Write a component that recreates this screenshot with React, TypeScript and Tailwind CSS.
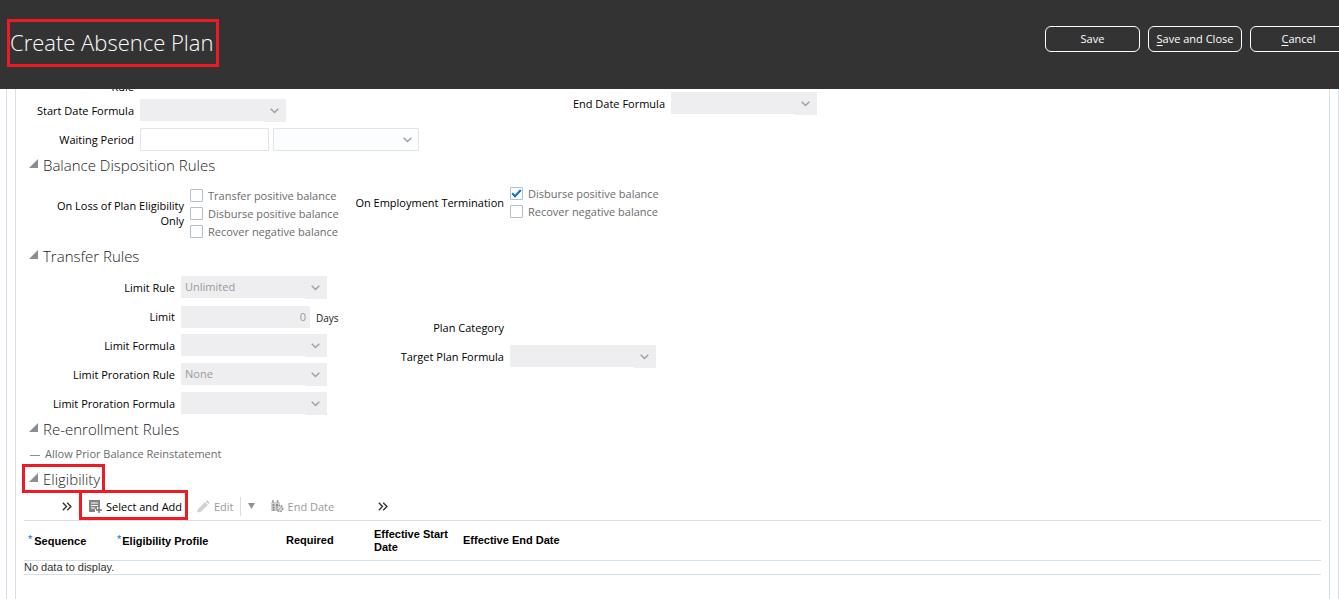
import React from "react";

interface SelectFieldProps {
    id: string;
    label?: string;
    value?: string;
    disabled?: boolean;
}

interface FieldRowProps {
    id?: string;
    label: string;
    labelClass: string;
    children?: React.ReactNode;
}

interface CheckItem {
    id: string;
    label: string;
    checked?: boolean;
}

const lossOptions: CheckItem[] = [
    { id: "loss-transfer", label: "Transfer positive balance" },
    { id: "loss-disburse", label: "Disburse positive balance" },
    { id: "loss-recover", label: "Recover negative balance" },
];

const terminationOptions: CheckItem[] = [
    { id: "term-disburse", label: "Disburse positive balance", checked: true },
    { id: "term-recover", label: "Recover negative balance" },
];

const SelectField: React.FC<SelectFieldProps> = ({ id, label, value = "", disabled = true }) => (
    <span className="relative block h-[23px] w-[146px]">
        <select
            id={id}
            aria-label={label}
            disabled={disabled}
            defaultValue={value}
            className={
                disabled
                    ? "block h-[22px] w-full appearance-none rounded-[1px] bg-[#eeeef0] px-1 text-[11px] leading-[22px] text-[#999] opacity-100"
                    : "block h-[23px] w-full appearance-none rounded-[1px] border border-[#dfe4e7] bg-[#fcfdff] px-1 text-[11px]"
            }
        >
            <option value={value}>{value}</option>
        </select>
        <span
            className={
                disabled
                    ? "pointer-events-none absolute top-0 right-0 flex h-[23px] w-[22px] items-center justify-center bg-[#eeeef0] pt-px pr-px"
                    : "pointer-events-none absolute top-0 right-0 flex h-[23px] w-[22px] items-center justify-center pt-px pr-px"
            }
        >
            <svg width="9" height="6" viewBox="0 0 9 6" fill="none" stroke="#a0a0a3" strokeWidth="1.5">
                <path d="M0.7 0.8 L4.5 4.5 L8.3 0.8" />
            </svg>
        </span>
    </span>
);

const FieldRow: React.FC<FieldRowProps> = ({ id, label, labelClass, children }) => (
    <div className="flex h-[23px] items-center gap-1.5">
        <label htmlFor={id} className={labelClass}>
            {label}
        </label>
        {children}
    </div>
);

const SectionTitle: React.FC<{ title: string; marked?: boolean }> = ({ title, marked }) => (
    <div className="flex h-6">
        <button type="button" aria-expanded="true" className="relative flex items-center gap-[5px] pl-[5px]">
            <svg width="9" height="9" viewBox="0 0 9 9" className="mb-1.5">
                <path d="M9 0 V9 H0 Z" fill="#8b8f93" />
            </svg>
            <h2 className="pb-0.5 text-[15px] leading-[22px] font-light whitespace-nowrap text-[#222]">{title}</h2>
            {marked && (
                <span className="absolute -top-1 -left-0.5 z-10 h-[29px] w-[83px] border-3 border-[#ed1c24]" />
            )}
        </button>
    </div>
);

const CheckGroup: React.FC<{ items: CheckItem[] }> = ({ items }) => (
    <div>
        {items.map((item) => (
            <div key={item.id} className="flex h-[18px] items-center gap-[5px]">
                <span className="relative block size-[13px]">
                    <input
                        id={item.id}
                        type="checkbox"
                        disabled
                        defaultChecked={item.checked}
                        className="block size-[13px] appearance-none rounded-[1px] border border-[#b4bec8] bg-white"
                    />
                    {item.checked && (
                        <svg
                            width="13"
                            height="13"
                            viewBox="0 0 13 13"
                            fill="none"
                            stroke="#0572ce"
                            strokeWidth="2"
                            className="absolute inset-0"
                        >
                            <path d="M2.2 6.3 L5 9.2 L10.8 3" />
                        </svg>
                    )}
                </span>
                <label htmlFor={item.id} className="whitespace-nowrap text-[#6b6b6b]">
                    {item.label}
                </label>
            </div>
        ))}
    </div>
);

const MoreIcon: React.FC = () => (
    <svg width="10" height="9" viewBox="0 0 10 9" fill="none" stroke="#333" strokeWidth="1.4">
        <path d="M0.8 0.8 L4.5 4.5 L0.8 8.2 M5.2 0.8 L8.9 4.5 L5.2 8.2" />
    </svg>
);

const Toolbar: React.FC = () => (
    <div className="flex h-7 items-center pl-[38px]">
        <button type="button" aria-label="More view actions">
            <MoreIcon />
        </button>
        <button type="button" className="relative ml-[7px] flex h-7 w-[109px] items-center gap-1 pl-2.5 text-black">
            <svg width="13" height="13" viewBox="0 0 13 13" className="shrink-0">
                <path d="M0 0 H11 V7 H8 V9 H6 V12 H0 Z" fill="#808487" />
                <path d="M2 3 H9 M2 5.5 H9 M2 8 H6" stroke="#fff" strokeWidth="1" />
                <path d="M10 7 V13 M7 10 H13" stroke="#6b6f72" strokeWidth="1.4" />
            </svg>
            <span className="whitespace-nowrap">Select and Add</span>
            <span className="absolute inset-x-0 -top-0.5 bottom-0 z-10 border-3 border-[#ed1c24]" />
        </button>
        <button type="button" disabled className="ml-2 flex items-center gap-1 text-[#999]">
            <svg width="14" height="13" viewBox="0 0 14 13">
                <path d="M1 12.5 L2 9 L9 2 L12 5 L5 11.8 Z" fill="#d0d2d3" />
                <path d="M9.8 1.2 L11 0.2 L13.4 2.6 L12.6 4 Z" fill="#c2c5c6" />
            </svg>
            Edit
        </button>
        <button
            type="button"
            disabled
            aria-label="Edit options"
            className="ml-1.5 flex h-[19px] items-center border-l border-[#d6dfe6] pl-[7px]"
        >
            <svg width="7" height="6" viewBox="0 0 7 6">
                <path d="M0 0 H7 L3.5 6 Z" fill="#8f9294" />
            </svg>
        </button>
        <button type="button" disabled className="ml-4 flex items-center gap-1 text-[#999]">
            <svg width="13" height="13" viewBox="0 0 13 13">
                <path d="M0 2 H9 V5 H11 V11 H0 Z" fill="#d3d5d6" />
                <path d="M2 0 V3 M6.5 0 V3" stroke="#999c9e" strokeWidth="1.5" />
                <path
                    d="M1.5 5 H3.5 M1.5 7.5 H3.5 M1.5 10 H3.5 M5 5 H7"
                    stroke="#77797b"
                    strokeWidth="1.4"
                />
                <circle cx="8.7" cy="8.5" r="3" fill="#e4e5e5" stroke="#909394" strokeWidth="1.6" strokeDasharray="1.6 0.9" />
                <path d="M6.5 10.8 L11 6.3" stroke="#909394" />
            </svg>
            <span className="whitespace-nowrap">End Date</span>
        </button>
        <button type="button" aria-label="More actions" className="ml-11">
            <MoreIcon />
        </button>
    </div>
);

const EligibilityTable: React.FC = () => (
    <table className="w-full table-fixed border-collapse border-y border-[#d6dfe6] font-['Liberation_Sans',Arial,sans-serif] text-[11px] leading-[13px]">
        <colgroup>
            <col className="w-[89px]" />
            <col className="w-[169px]" />
            <col className="w-[88px]" />
            <col className="w-[89px]" />
            <col />
        </colgroup>
        <thead>
            <tr className="h-10 border-b border-[#d6dfe6] text-left text-black">
                <th className="px-1">
                    <span className="mr-0.5 align-[2px] font-normal text-[#0572ce]">*</span>
                    Sequence
                </th>
                <th className="px-1">
                    <span className="mr-px align-[2px] font-normal text-[#0572ce]">*</span>
                    Eligibility Profile
                </th>
                <th className="px-1">Required</th>
                <th className="px-1">Effective Start Date</th>
                <th className="px-1">Effective End Date</th>
            </tr>
        </thead>
        <tbody>
            <tr className="h-3.5">
                <td colSpan={5} className="p-0 text-[#333]">
                    No data to display.
                </td>
            </tr>
        </tbody>
    </table>
);

const App: React.FC = () => {
    const topLabel = "w-[110px] text-right whitespace-nowrap";
    const endLabel = "w-[200px] text-right whitespace-nowrap";
    const limitLabel = "w-[151px] text-right whitespace-nowrap";
    const rightLabel = "w-40 text-right whitespace-nowrap";

    return (
        <div className="flex min-h-screen flex-col overflow-x-hidden bg-white font-['Open_Sans','Noto_Sans',sans-serif] text-[11px] leading-[15px] text-black">
            <header className="relative z-20 flex h-[89px] items-start justify-between bg-[#333] pl-[7px]">
                <h1 className="mt-[19px] flex h-12 w-[212px] items-center border-3 border-[#ed1c24] pb-0.5 text-[22px] font-light whitespace-nowrap text-white">
                    Create Absence Plan
                </h1>
                <div className="mt-[26px] -mr-2 flex gap-2 text-white">
                    <button type="button" className="h-[26px] w-[95px] rounded-md border border-white pb-0.5">
                        Save
                    </button>
                    <button type="button" className="h-[26px] w-[94px] rounded-md border border-white pb-0.5 whitespace-nowrap">
                        <span className="underline underline-offset-2">S</span>ave and Close
                    </button>
                    <button type="button" className="h-[26px] w-[97px] rounded-md border border-white pb-0.5">
                        <span className="underline underline-offset-2">C</span>ancel
                    </button>
                </div>
            </header>

            <main className="-mt-2.5 ml-1.5 flex grow border-x border-[#d6dfe6] px-2">
                <div className="min-w-0 grow border-x border-[#d6dfe6] px-2">
                    {/* Tail of the rules block, scrolled under the header */}
                    <div className="flex">
                        <div className="w-[441px]">
                            <p className="w-[110px] text-right">Rule</p>
                            <div className="mt-[5px] flex flex-col gap-1.5">
                                <FieldRow id="start-formula" label="Start Date Formula" labelClass={topLabel}>
                                    <SelectField id="start-formula" />
                                </FieldRow>
                                <FieldRow id="waiting" label="Waiting Period" labelClass={topLabel}>
                                    <div className="flex gap-1">
                                        <input
                                            id="waiting"
                                            type="text"
                                            className="h-[23px] w-[129px] rounded-[1px] border border-[#dfe4e7] bg-white px-1"
                                        />
                                        <SelectField id="waiting-unit" label="Waiting period unit" disabled={false} />
                                    </div>
                                </FieldRow>
                            </div>
                        </div>
                        <div className="pt-[13px]">
                            <FieldRow id="end-formula" label="End Date Formula" labelClass={endLabel}>
                                <SelectField id="end-formula" />
                            </FieldRow>
                        </div>
                    </div>

                    <section className="mt-[3px]">
                        <SectionTitle title="Balance Disposition Rules" />
                        <div className="mt-1.5 flex">
                            <div className="flex w-80 items-center gap-1.5 pt-0.5">
                                <p className="w-40 pl-6 text-right">On Loss of Plan Eligibility Only</p>
                                <CheckGroup items={lossOptions} />
                            </div>
                            <div className="flex items-center gap-1.5 self-start">
                                <p className={rightLabel}>On Employment Termination</p>
                                <CheckGroup items={terminationOptions} />
                            </div>
                        </div>
                    </section>

                    <section className="mt-[5px]">
                        <SectionTitle title="Transfer Rules" />
                        <div className="mt-[7px] flex">
                            <div className="flex w-80 flex-col gap-1.5">
                                <FieldRow id="limit-rule" label="Limit Rule" labelClass={limitLabel}>
                                    <SelectField id="limit-rule" value="Unlimited" />
                                </FieldRow>
                                <FieldRow id="limit" label="Limit" labelClass={limitLabel}>
                                    <input
                                        id="limit"
                                        type="text"
                                        disabled
                                        defaultValue="0"
                                        className="h-[22px] w-[129px] rounded-[1px] bg-[#eeeef0] px-1 text-right text-[#999]"
                                    />
                                    <span className="pt-1 text-[10px] text-[#222]">Days</span>
                                </FieldRow>
                                <FieldRow id="limit-formula" label="Limit Formula" labelClass={limitLabel}>
                                    <SelectField id="limit-formula" />
                                </FieldRow>
                                <FieldRow id="proration-rule" label="Limit Proration Rule" labelClass={limitLabel}>
                                    <SelectField id="proration-rule" value="None" />
                                </FieldRow>
                                <FieldRow id="proration-formula" label="Limit Proration Formula" labelClass={limitLabel}>
                                    <SelectField id="proration-formula" />
                                </FieldRow>
                            </div>
                            <div className="flex flex-col gap-1.5 pt-10">
                                <FieldRow label="Plan Category" labelClass={rightLabel} />
                                <FieldRow id="target-formula" label="Target Plan Formula" labelClass={rightLabel}>
                                    <SelectField id="target-formula" />
                                </FieldRow>
                            </div>
                        </div>
                    </section>

                    <section className="mt-[3px]">
                        <SectionTitle title="Re-enrollment Rules" />
                        <div className="mt-1 flex items-center gap-[5px] pl-1.5 text-[#6b6b6b]">
                            <span className="mt-1 h-px w-2.5 bg-[#8b8f93]" />
                            <p>Allow Prior Balance Reinstatement</p>
                        </div>
                    </section>

                    <section className="mt-[7px]">
                        <SectionTitle title="Eligibility" marked />
                        <Toolbar />
                        <EligibilityTable />
                    </section>
                </div>
            </main>
        </div>
    );
};

export default App;
